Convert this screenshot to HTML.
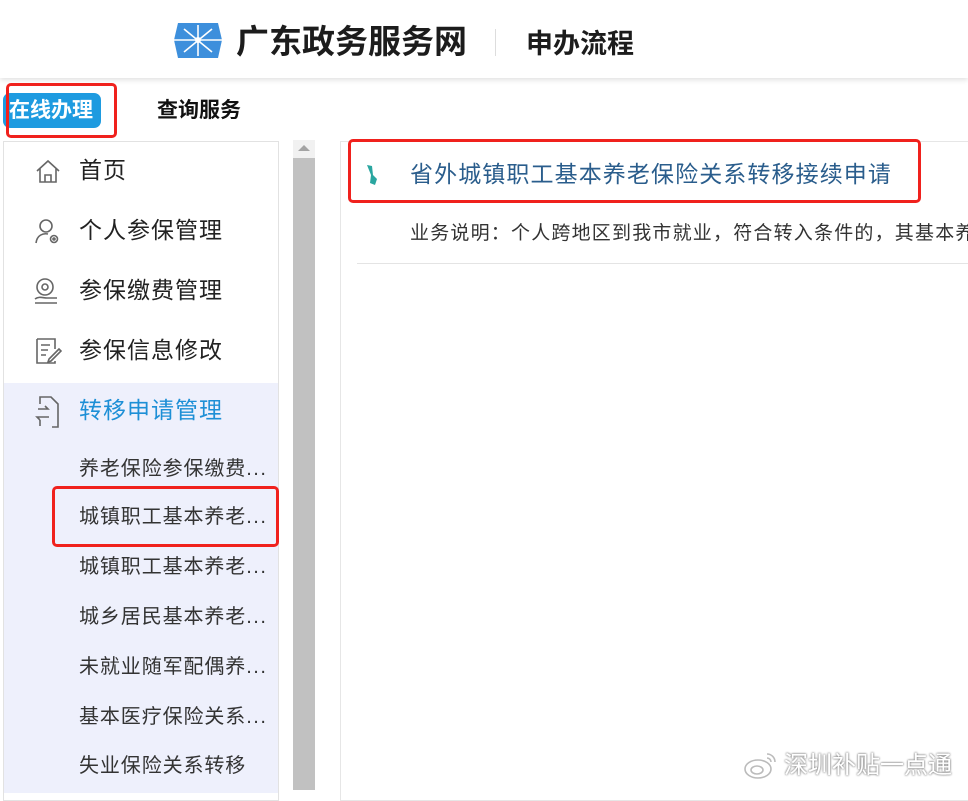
<!DOCTYPE html>
<html><head><meta charset="utf-8"><style>
*{margin:0;padding:0;box-sizing:border-box}
body{width:968px;height:789px;overflow:hidden;background:#fff;font-family:"Liberation Sans","Noto Sans CJK SC",sans-serif;position:relative;color:#222}
.a{position:absolute;white-space:nowrap}
.red{position:absolute;border:3px solid #f0211d;border-radius:5px}
.mi{position:absolute;left:79px;font-size:23px;letter-spacing:1px;color:#222;line-height:30px}
.si{position:absolute;left:79px;font-size:20px;letter-spacing:0.9px;color:#333;line-height:24px}
.si i{font-style:normal;letter-spacing:1.5px}
</style></head><body>
<div class="a" style="left:0;top:0;width:968px;height:78px;background:#fff;box-shadow:0 2px 5px rgba(0,0,0,.12)"></div>
<svg class="a" style="left:172px;top:23px" width="52" height="35" viewBox="0 0 52 35">
<polygon points="6,0 46,0 50,17 46,35 6,35 2,17" fill="#3d8fdc"/>
<g stroke="#fff" stroke-width="1.6"><line x1="26" y1="2" x2="26" y2="33"/><line x1="12" y1="6" x2="40" y2="29"/><line x1="40" y1="6" x2="12" y2="29"/><line x1="2" y1="17" x2="50" y2="17"/></g>
<circle cx="26" cy="17" r="3" fill="#fff"/></svg>
<div class="a" style="left:236px;top:21px;font-size:33px;font-weight:bold;color:#1c1c1c;line-height:42px">广东政务服务网</div>
<div class="a" style="left:495px;top:29px;width:1px;height:27px;background:#ddd"></div>
<div class="a" style="left:526px;top:27px;font-size:27px;font-weight:bold;color:#1c1c1c;line-height:34px">申办流程</div>
<div class="a" style="left:3px;top:93px;width:98px;height:35px;background:#1e9be0;border-radius:7px"></div>
<div class="a" style="left:9px;top:97px;font-size:21px;font-weight:bold;color:#fff;line-height:27px">在线办理</div>
<div class="a" style="left:157px;top:97px;font-size:21px;font-weight:bold;color:#111;line-height:27px">查询服务</div>
<div class="red" style="left:6px;top:83px;width:111px;height:55px"></div>

<div class="a" style="left:3px;top:141px;width:276px;height:660px;border:1px solid #e2e2e2;background:#fff"></div>
<div class="a" style="left:4px;top:383px;width:274px;height:410px;background:#eef0fc"></div>
<svg class="a" style="left:35px;top:158px" width="26" height="26" viewBox="0 0 26 26" fill="none" stroke="#666" stroke-width="1.6"><path d="M2 13 L13 3 L24 13 M5 10 V24 H21 V10 M10 24 V17 H16 V24"/></svg>
<svg class="a" style="left:35px;top:218px" width="26" height="28" viewBox="0 0 26 28" fill="none" stroke="#666" stroke-width="1.6"><circle cx="11" cy="8" r="6"/><path d="M1 25 C2 17 8 15 13 16"/><circle cx="19" cy="21" r="3.5"/><circle cx="19" cy="21" r="1"/></svg>
<svg class="a" style="left:33px;top:277px" width="28" height="28" viewBox="0 0 28 28" fill="none" stroke="#666" stroke-width="1.6"><circle cx="12" cy="10" r="8"/><circle cx="12" cy="10" r="3"/><path d="M2 22 C6 19 10 21 14 21 H24 M2 26 H24"/></svg>
<svg class="a" style="left:35px;top:337px" width="27" height="28" viewBox="0 0 27 28" fill="none" stroke="#666" stroke-width="1.6"><path d="M2 2 H20 V12 M2 2 V26 H20 V24 M6 8 H15 M6 13 H13 M6 18 H11"/><path d="M24 12 L14 22 L13 25 L16 24 L26 14 Z"/></svg>
<svg class="a" style="left:34px;top:396px" width="26" height="32" viewBox="0 0 26 32" fill="none" stroke="#666" stroke-width="1.6"><path d="M6 8 V1 H17 L24 8 V31 H18 M6 24 V30"/><path d="M4 13 H14 L11 10 M15 21 H3 L6 24"/></svg>
<div class="mi" style="top:155px">首页</div>
<div class="mi" style="top:215px">个人参保管理</div>
<div class="mi" style="top:275px">参保缴费管理</div>
<div class="mi" style="top:335px">参保信息修改</div>
<div class="mi" style="top:395px;color:#1d8fd6">转移申请管理</div>
<div class="si" style="top:457px">养老保险参保缴费<i>...</i></div>
<div class="si" style="top:505px">城镇职工基本养老<i>...</i></div>
<div class="si" style="top:555px">城镇职工基本养老<i>...</i></div>
<div class="si" style="top:605px">城乡居民基本养老<i>...</i></div>
<div class="si" style="top:655px">未就业随军配偶养<i>...</i></div>
<div class="si" style="top:705px">基本医疗保险关系<i>...</i></div>
<div class="si" style="top:754px">失业保险关系转移</div>
<div class="red" style="left:52px;top:486px;width:227px;height:61px"></div>

<div class="a" style="left:293px;top:140px;width:22px;height:650px;background:#c1c1c1"></div>
<div class="a" style="left:293px;top:140px;width:22px;height:18px;background:#f1f1f1"></div>
<div class="a" style="left:298px;top:145px;width:0;height:0;border-left:6px solid transparent;border-right:6px solid transparent;border-bottom:6px solid #a3a3a3"></div>

<div class="a" style="left:340px;top:141px;width:640px;height:660px;border:1px solid #e6e6e6;background:#fff"></div>
<svg class="a" style="left:364px;top:163px" width="16" height="24" viewBox="0 0 16 24"><path d="M3 2 L8 3 L9 12 L13 16 L11 22 L6 20 L7 12 Z" fill="#2aa6a0"/></svg>
<div class="a" style="left:410px;top:158px;font-size:23px;letter-spacing:1.1px;color:#2a5d8c;line-height:32px">省外城镇职工基本养老保险关系转移接续申请</div>
<div class="red" style="left:348px;top:139px;width:573px;height:64px"></div>
<div class="a" style="left:410px;top:222px;font-size:19px;letter-spacing:1.2px;color:#333;line-height:24px">业务说明：个人跨地区到我市就业，符合转入条件的，其基本养老</div>
<div class="a" style="left:357px;top:263px;width:611px;height:1px;background:#e4e4e4"></div>

<svg class="a" style="left:743px;top:750px" width="36" height="30" viewBox="0 0 36 30" fill="none" stroke="#bbb" stroke-width="1.6"><ellipse cx="15" cy="19" rx="13" ry="9"/><ellipse cx="14" cy="20" rx="6" ry="4"/><path d="M24 4 A8 8 0 0 1 32 12 M24 8 A4 4 0 0 1 28 12"/></svg>
<div class="a" style="left:784px;top:750px;font-size:24px;color:#fff;line-height:32px;text-shadow:0 0 2px #888,0 0 2px #888">深圳补贴一点通</div>
</body></html>
